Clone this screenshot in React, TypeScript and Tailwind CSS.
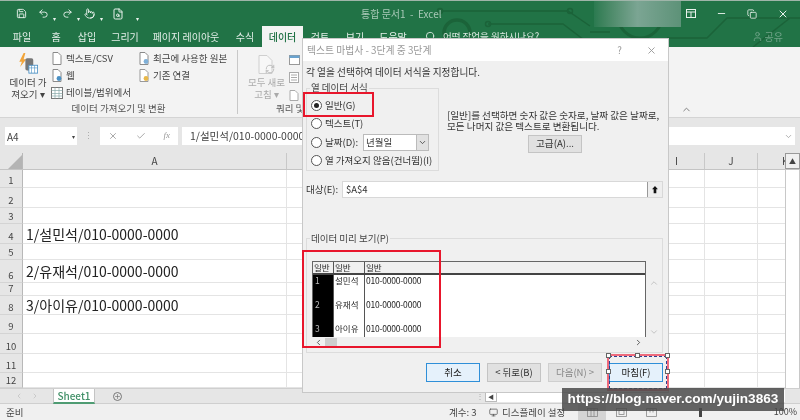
import React from "react";
import { Save, Undo2, Redo2, Pointer, FileSearch, ChevronDown, ChevronUp, ChevronLeft, ChevronRight, X, Check, Search, User, Minus, Copy, Plus, RefreshCw, Monitor } from "lucide-react";

const FONT = "font-['Noto_Sans_CJK_KR','Noto_Sans',sans-serif]";

function Tab({ w, children, active }: { w: number; children: React.ReactNode; active?: boolean }) {
  return (
    <div
      style={{ width: w }}
      className={`h-[21px] flex items-center justify-center text-[10px] whitespace-nowrap ${active ? "bg-[#f3f3f3] text-[#217346] font-medium" : "text-[#e4efe9]"}`}
    >
      {children}
    </div>
  );
}

function DocIcon({ tone = "#8a8a8a", accent }: { tone?: string; accent?: string }) {
  return (
    <svg width="12" height="13" viewBox="0 0 12 13" className="shrink-0">
      <path d="M2 .5h5l3 3v9H2z" fill="#fff" stroke={tone} />
      {accent && <circle cx="8" cy="9.5" r="2.4" fill={accent} />}
    </svg>
  );
}

function GroupIcon({ dot }: { dot?: string }) {
  return (
    <svg width="11" height="11" viewBox="0 0 11 11" className="shrink-0">
      <rect x="3" y="1.500" width="7.500" height="9" fill="#fff" stroke="#999" strokeWidth=".8" />
      <path d="M3 4.500h7.500M3 7.500h7.500M6.500 1.500v9" stroke="#aaa" strokeWidth=".7" />
      {dot && <path d="M0 2.500h3M1.500 1v3" stroke="#3f9a6b" strokeWidth="1" />}
      {dot && <rect x="1" y="5" width="2" height="4" fill={dot} />}
    </svg>
  );
}

function OutlineMark({ sign }: { sign: string }) {
  return (
    <svg width="11" height="10" viewBox="0 0 11 10" className="shrink-0">
      <path d="M5 1h6M5 5h6M5 9h6M10.500 1v8" stroke="#c8c8c8" strokeWidth="1" fill="none" />
      <path d={sign} stroke="#bbb" strokeWidth="1" fill="none" />
    </svg>
  );
}

function RItem({ icon, children, cls = "text-[#444]" }: { icon: React.ReactNode; children: React.ReactNode; cls?: string }) {
  return (
    <div className={`h-[17px] flex items-center gap-[3px] text-[9.500px] whitespace-nowrap ${cls}`}>
      {icon}
      <span>{children}</span>
    </div>
  );
}

function Radio({ on }: { on?: boolean }) {
  return (
    <span className="w-[11px] h-[11px] rounded-full border border-[#555] bg-white flex items-center justify-center shrink-0">
      {on && <span className="w-[5px] h-[5px] rounded-full bg-[#222]" />}
    </span>
  );
}

function DlgBtn({ children, kind }: { children: React.ReactNode; kind: "blue" | "gray" | "off" }) {
  const c =
    kind === "blue"
      ? "border-[#2f8fd8] bg-[#e5f1fb] text-[#222]"
      : kind === "gray"
      ? "border-[#c4c4c4] bg-[#e1e1e1] text-[#333]"
      : "border-[#cfcfcf] bg-[#e1e1e1] text-[#888]";
  return <div className={`w-[54px] h-[19px] border flex items-center justify-center text-[9.500px] whitespace-nowrap ${c}`}>{children}</div>;
}

const ROWS = [18, 20, 16, 20, 16, 23, 13, 19, 19, 20, 19, 15];
const TEXT: Record<number, string> = { 4: "1/설민석/010-0000-0000", 6: "2/유재석/010-0000-0000", 8: "3/아이유/010-0000-0000" };

function Row({ n, h }: { n: number; h: number }) {
  return (
    <div style={{ height: h }} className="flex shrink-0">
      <div className="w-[23px] bg-[#e6e6e6] border-r border-b border-r-[#b8b8b8] border-b-[#d4d4d4] text-[9.500px] text-[#444] flex items-end justify-center pb-[2px] leading-none">{n}</div>
      <div className="w-[264px] border-r border-b border-[#e4e4e4] flex items-center pl-[3px]">
        {TEXT[n] && <span className="text-[14px] leading-none text-[#222] whitespace-nowrap">{TEXT[n]}</span>}
      </div>
      <div className="flex-1 flex border-b border-[#e4e4e4]">
        <div className="w-[418px] border-r border-[#e4e4e4]" />
        <div className="w-[53px] border-r border-[#e4e4e4]" />
        <div className="w-[27px]" />
      </div>
      <div className="w-[15px] bg-white border-x border-[#c8c8c8]" />
    </div>
  );
}

function Handle({ cls }: { cls: string }) {
  return <span className={`absolute w-[5px] h-[5px] bg-white border border-[#666] ${cls}`} />;
}

function Caret() {
  return <span className="text-[6px] text-[#e9f2ec]">▾</span>;
}

export default function App() {
  return (
    <div className={`${FONT} relative w-[800px] h-[420px] overflow-hidden bg-white flex flex-col blur-[0.35px]`}>
      {/* Title + tabs */}
      <div className="relative h-[47px] bg-[#217346] border-t border-[#9fb5a9] shrink-0">
        <svg className="absolute inset-0" width="800" height="46" viewBox="0 1 800 46" fill="none" stroke="#1b6339" strokeWidth="1.500">
          <path d="M440 11H568L590 26M488 24H563L592 46M590 32H610M667 38H707L727 18H800M753 47L790 18" />
          <circle cx="440" cy="11" r="2.500" />
          <circle cx="570" cy="11" r="2.500" />
          <circle cx="488" cy="24" r="2.500" />
          <circle cx="457" cy="33" r="13" strokeWidth="3.500" />
          <circle cx="640" cy="16" r="22" strokeWidth="3" />
        </svg>
        <div className="absolute left-[594px] top-0 w-[87px] h-[26px] bg-gradient-to-r from-[#2b7a50] via-[#7ba593] to-[#5d9278]" />
        <div className="relative h-[25px] flex items-center">
          <div className="flex items-center w-[150px] pl-[16px] text-[#e9f2ec]">
            <Save size={11} />
            <Undo2 size={11} className="ml-[11px]" />
            <span className="ml-[4px]"><Caret /></span>
            <Redo2 size={11} className="ml-[6px]" />
            <span className="ml-[4px]"><Caret /></span>
            <Pointer size={11} className="ml-[4px]" />
            <span className="ml-[5px]"><Caret /></span>
            <FileSearch size={12} className="ml-[9px]" />
            <span className="ml-[12px]"><Caret /></span>
          </div>
          <div className="pl-[211px] w-[386px] text-[10px] text-[#a9c9b8] whitespace-nowrap">통합 문서1 &nbsp;-&nbsp; Excel</div>
          <div className="flex items-center text-[#e9f2ec] pl-[150px] gap-[20px]">
            <svg width="10" height="9" viewBox="0 0 10 9" fill="none" stroke="currentColor"><rect x=".5" y=".5" width="9" height="8" /><path d="M.5 3h9M5 3v5.500" /></svg>
            <Minus size={11} />
            <Copy size={10} />
            <X size={12} />
          </div>
        </div>
        <div className="relative h-[21px] flex items-center">
          <Tab w={44}>파일</Tab>
          <Tab w={24}>홈</Tab>
          <Tab w={38}>삽입</Tab>
          <Tab w={38}>그리기</Tab>
          <Tab w={84}>페이지 레이아웃</Tab>
          <Tab w={34}>수식</Tab>
          <Tab w={41} active>데이터</Tab>
          <Tab w={34}>검토</Tab>
          <Tab w={36}>보기</Tab>
          <Tab w={40}>도움말</Tab>
          <Search size={11} className="ml-[12px] text-[#dbe9e1]" />
          <span className="text-[9.500px] text-[#dbe9e1] ml-[7px] whitespace-nowrap">어떤 작업을 원하시나요?</span>
          <span className="ml-auto mr-[17px] flex items-center gap-[2px] text-[10px] text-[#6fa388]">
            <User size={11} />
            공유
          </span>
        </div>
      </div>

      {/* Ribbon */}
      <div className="h-[71px] bg-[#f3f3f3] border-b border-[#d4d4d4] flex shrink-0">
        <div className="w-[238px] border-r border-[#c8c8c8] my-[3px] flex flex-col">
          <div className="flex-1 flex">
            <div className="w-[56px] flex flex-col items-center pt-[3px]">
              <svg width="20" height="21" viewBox="0 0 22 24">
                <path d="M6 0L1 10h3l-2 6 7-9H6l2-7z" fill="#f2a53a" />
                <rect x="8" y="6" width="9" height="14" rx="2" fill="#777" />
                <rect x="12" y="14" width="10" height="9" fill="#fff" stroke="#4a90c4" />
                <path d="M12 17h10M15 14v9M18.500 14v9" stroke="#4a90c4" strokeWidth=".7" />
              </svg>
              <div className="text-[9.500px] leading-[12px] text-[#444] text-center whitespace-nowrap mt-[2px]">데이터 가<br />져오기 ▾</div>
            </div>
            <div className="w-[82px] flex flex-col -ml-[5px] mr-[5px]">
              <RItem icon={<DocIcon />}>텍스트/CSV</RItem>
              <RItem icon={<DocIcon accent="#4a90c4" />}>웹</RItem>
              <RItem icon={<svg width="12" height="12" viewBox="0 0 12 12"><rect x=".5" y=".5" width="11" height="11" fill="#fff" stroke="#777" /><path d="M.5 3.500h11M.5 6.500h11M.5 9h11M4 .5v11M8 .5v11" stroke="#8aa" strokeWidth=".7" /></svg>}>테이블/범위에서</RItem>
            </div>
            <div className="flex flex-col">
              <RItem icon={<DocIcon accent="#7fb0d8" />}>최근에 사용한 원본</RItem>
              <RItem icon={<DocIcon tone="#999" accent="#e8b84a" />}>기존 연결</RItem>
            </div>
          </div>
          <div className="h-[14px] text-[9.500px] leading-[14px] text-[#555] text-center whitespace-nowrap">데이터 가져오기 및 변환</div>
        </div>
        <div className="flex-1 flex flex-col my-[3px] pl-[7px]">
          <div className="flex-1 flex text-[#aaa]">
            <div className="w-[43px] flex flex-col items-center pt-[5px]">
              <div className="relative w-[17px] h-[20px]">
                <svg width="15" height="19" viewBox="0 0 15 19" className="shrink-0"><path d="M1 .5h8l5 5v13H1z" fill="#f7f7f7" stroke="#cfcfcf" /></svg>
                <RefreshCw size={10} className="absolute right-0 bottom-[1px] text-[#b4b4b4]" />
              </div>
              <div className="text-[9.500px] leading-[12px] text-center whitespace-nowrap mt-[1px]">모두 새로<br />고침 ▾</div>
            </div>
            <div className="flex flex-col gap-[7px] pt-[5px] ml-[1px]">
              <svg width="11" height="10" viewBox="0 0 11 10" className="shrink-0"><rect x=".5" y=".5" width="10" height="9" fill="#fff" stroke="#999" /><rect x=".5" y=".5" width="10" height="2.500" fill="#6aa3cf" /></svg>
              <svg width="10" height="11" viewBox="0 0 10 11" className="shrink-0"><rect x=".5" y=".5" width="9" height="10" fill="#fff" stroke="#aaa" /><path d="M2 3h6M2 5.500h6M2 8h6" stroke="#aaa" /></svg>
              <svg width="10" height="11" viewBox="0 0 10 11" className="shrink-0"><path d="M1 .5h5l3 3v7H1z" fill="#fff" stroke="#aaa" /></svg>
            </div>
          </div>
          <div className="h-[14px] text-[9.500px] leading-[14px] text-[#555] pl-[31px] whitespace-nowrap">쿼리 및 연결</div>
        </div>
        <div className="w-[99px] flex flex-col my-[3px] border-l-2 border-r border-[#d0d0d0] pl-[8px] relative">
          <div className="flex-1 flex flex-col">
            <div className="flex items-center">
              <RItem icon={<GroupIcon dot="#3f9a6b" />}>그룹</RItem>
              <span className="text-[7px] text-[#555] ml-[6px]">▾</span>
              <span className="ml-auto mr-[7px]"><OutlineMark sign="M0 3h4M2 1v4" /></span>
            </div>
            <div className="flex items-center">
              <RItem icon={<GroupIcon dot="#d9534f" />}>그룹 해제</RItem>
              <span className="text-[7px] text-[#555] ml-[8px]">▾</span>
              <span className="ml-auto mr-[7px]"><OutlineMark sign="M0 3h4" /></span>
            </div>
            <RItem icon={<GroupIcon />}>부분합</RItem>
          </div>
          <div className="h-[14px] flex items-center text-[9.500px] text-[#555] pl-[25px]">
            개요
            <svg width="7" height="7" viewBox="0 0 7 7" fill="none" stroke="#888" strokeWidth=".8" className="ml-auto mr-[3px]"><path d="M.5 3V.5H6.500V6.500H3M2 2l3 3M3 5h2V3" /></svg>
          </div>
        </div>
        <div className="flex-1 flex items-end justify-center pb-[2px] text-[#777]">
          <ChevronUp size={11} />
        </div>
      </div>

      {/* Formula bar */}
      <div className="h-[35px] bg-[#e6e6e6] flex items-center pl-[5px] pr-[5px] pt-[1px] shrink-0">
        <div className="w-[72px] h-[18px] bg-white flex items-center justify-between px-[2px] text-[10px] text-[#444]">
          A4 <span className="text-[6px]">▾</span>
        </div>
        <div className="w-[23px] text-center text-[9px] text-[#aaa]">⋮</div>
        <div className="w-[78px] h-[18px] bg-white flex items-center justify-between px-[8px] text-[#999]">
          <X size={10} />
          <Check size={10} />
          <span className="italic text-[9px] font-['Liberation_Serif',serif]">fx</span>
        </div>
        <div className="flex-1 h-[18px] bg-white ml-[4px] flex items-center pl-[8px] text-[10.500px] text-[#444]">1/설민석/010-0000-0000
          <ChevronDown size={9} className="ml-auto mr-[2px] text-[#999]" />
        </div>
      </div>

      {/* Column header */}
      <div className="h-[17px] flex bg-[#e6e6e6] border-b border-[#c4c4c4] shrink-0">
        <div className="w-[23px] border-r border-[#b8b8b8] flex items-end justify-end">
          <svg width="14" height="14" viewBox="0 0 14 14"><path d="M14 0V14H0z" fill="#b4b4b4" /></svg>
        </div>
        <div className="w-[264px] border-r border-[#c8c8c8] text-center text-[10px] text-[#444] leading-[16px]">A</div>
        <div className="flex-1 flex text-[10px] text-[#444] leading-[16px]">
          <div className="w-[418px] border-r border-[#c8c8c8] text-right pr-[26px]">I</div>
          <div className="w-[53px] border-r border-[#c8c8c8] text-center">J</div>
          <div className="w-[27px] pl-[24px]">K</div>
        </div>
        <div className="w-[15px] bg-[#f0f0f0] border border-[#999] flex items-center justify-center text-[7px] text-[#444]">▲</div>
      </div>

      {/* Grid */}
      <div className="h-[218px] overflow-hidden flex flex-col shrink-0">
        {ROWS.map((h, i) => (
          <Row key={i} n={i + 1} h={h} />
        ))}
      </div>

      {/* Sheet tabs */}
      <div className="h-[16px] bg-[#e6e6e6] border-y border-[#cfcfcf] flex items-center shrink-0">
        <div className="w-[53px] flex justify-center gap-[8px] text-[#bbb]">
          <ChevronLeft size={8} />
          <ChevronRight size={8} />
        </div>
        <div className="w-[42px] h-[15px] bg-white border-x border-b-2 border-x-[#c4c4c4] border-b-[#4f9c73] text-[10px] leading-[14px] text-[#3f8f66] font-medium text-center">Sheet1</div>
        <div className="ml-[18px] w-[9px] h-[9px] rounded-full border border-[#777] flex items-center justify-center text-[#666]">
          <Plus size={7} />
        </div>
        <div className="ml-[354px] text-[8px] text-[#aaa] w-[9px]">⋮</div>
        <div className="w-[12px] h-[12px] bg-white border border-[#bbb] flex items-center justify-center text-[6px] text-[#444]">◀</div>
        <div className="flex-1 h-[12px] bg-white mr-[15px]" />
      </div>

      {/* Status bar */}
      <div className="flex-1 bg-[#f0f0f0] flex items-center text-[9.500px] text-[#444] pl-[6px]">
        <span className="w-[443px]">준비</span>
        <span className="w-[40px] whitespace-nowrap">계수: 3</span>
        <Monitor size={9} className="text-[#555]" />
        <span className="ml-[4px] w-[76px] whitespace-nowrap">디스플레이 설정</span>
        <div className="w-[28px] h-full bg-[#d4d4d4] flex items-center justify-center text-[#888]">
          <svg width="11" height="9" viewBox="0 0 11 9" fill="none" stroke="currentColor" strokeWidth=".8"><rect x=".5" y=".5" width="10" height="8" /><path d="M4 .5v8M7 .5v8" /></svg>
        </div>
        <div className="w-[30px] flex justify-center text-[#888]">
          <svg width="11" height="9" viewBox="0 0 11 9" fill="none" stroke="currentColor" strokeWidth=".8"><rect x=".5" y=".5" width="10" height="8" /><rect x="3" y="2.500" width="5" height="4" /></svg>
        </div>
        <div className="w-[30px] flex justify-center text-[#888]">
          <svg width="11" height="9" viewBox="0 0 11 9" fill="none" stroke="currentColor" strokeWidth=".8"><path d="M.5 .5h10v8H.5zM4 .5v4M7 .5v4" /></svg>
        </div>
        <span className="ml-[33px] w-[3px] h-[9px] bg-[#444]" />
        <span className="ml-auto mr-[3px] text-[9px]">100%</span>
      </div>

      {/* Dialog */}
      <div className="absolute left-[302px] top-[38px] w-[367px] h-[355px] bg-[#f0f0f0] border border-[#c8c8c8] z-20 flex flex-col px-[3px]">
        <div className="-mx-[3px] h-[22px] bg-white flex items-center pl-[4px] pr-[11px] text-[9.800px] text-[#999] shrink-0">
          <span>텍스트 마법사 - 3단계 중 3단계</span>
          <span className="ml-auto mr-[24px]">?</span>
          <X size={11} />
        </div>
        <div className="h-[21px] flex items-center text-[9.700px] text-[#333] whitespace-nowrap mt-[1px] shrink-0">각 열을 선택하여 데이터 서식을 지정합니다.</div>
        <div className="flex shrink-0">
          <div className="relative w-[133px] h-[83px] border border-[#dcdcdc] mt-[5px] flex flex-col pl-[4px] pt-[7px] text-[9.500px] text-[#333] shrink-0">
            <span className="absolute -top-[8px] left-[3px] bg-[#f0f0f0] px-[1px] leading-[12px] text-[#444]">열 데이터 서식</span>
            <div className="h-[18px] flex items-center gap-[3px]"><Radio on />일반(G)</div>
            <div className="h-[19px] flex items-center gap-[3px]"><Radio />텍스트(T)</div>
            <div className="h-[18px] flex items-center gap-[3px]">
              <Radio />날짜(D):
              <div className="ml-[2px] w-[66px] h-[17px] bg-white border border-[#bbb] flex items-center pl-[2px] justify-between">
                년월일
                <span className="w-[12px] h-full bg-[#e1e1e1] border-l border-[#bbb] flex items-center justify-center"><ChevronDown size={9} /></span>
              </div>
            </div>
            <div className="h-[18px] flex items-center gap-[3px] whitespace-nowrap"><Radio />열 가져오지 않음(건너뜀)(I)</div>
          </div>
          <div className="flex-1 pl-[8px] pt-[27px] flex flex-col text-[9.600px] leading-[11px] text-[#333] whitespace-nowrap">
            <div>[일반]를 선택하면 숫자 값은 숫자로, 날짜 값은 날짜로,</div>
            <div>모든 나머지 값은 텍스트로 변환됩니다.</div>
            <div className="ml-[81px] mt-[3px] w-[54px] h-[18px] bg-[#e1e1e1] border border-[#c4c4c4] flex items-center justify-center leading-none">고급(A)...</div>
          </div>
        </div>
        <div className="mt-[10px] flex items-center h-[17px] text-[9.500px] text-[#333] shrink-0">
          <span className="w-[36px]">대상(E):</span>
          <div className="flex-1 h-full mr-[2px] bg-white border border-[#d8d8d8] flex items-center justify-between pl-[3px]">
            $A$4
            <span className="w-[15px] h-full bg-[#eee] border-l border-[#999] flex items-center justify-center text-[8px] text-[#111]">⬆</span>
          </div>
        </div>
        <div className="relative mt-[40px] w-[357px] h-[115px] border border-[#dcdcdc] shrink-0 pl-[5px] pt-[22px]">
          <span className="absolute -top-[7px] left-[3px] bg-[#f0f0f0] px-[1px] text-[9.500px] leading-[12px] text-[#444]">데이터 미리 보기(P)</span>
          <div className="flex">
            <div className="w-[334px] border-x border-t border-[#666] flex flex-col text-[8.500px] text-[#222] shrink-0">
              <div className="flex h-[13px] bg-[#f0f0f0] border-b-2 border-[#444] leading-[11px]">
                <div className="w-[21px] border-r border-[#555] pl-[1px]">일반</div>
                <div className="w-[31px] border-r border-[#555] pl-[1px]">일반</div>
                <div className="pl-[1px]">일반</div>
              </div>
              <div className="flex h-[62px] bg-white leading-[10px]">
                <div className="w-[20px] bg-black text-[#bbb] pl-[2px] flex flex-col gap-[14px]"><span>1</span><span>2</span><span>3</span></div>
                <div className="w-[32px] border-x border-[#555] pl-[1px] flex flex-col gap-[14px]"><span>설민석</span><span>유재석</span><span>아이유</span></div>
                <div className="flex-1 pl-[1px] flex flex-col gap-[14px] tracking-[-0.2px]"><span>010-0000-0000</span><span>010-0000-0000</span><span>010-0000-0000</span></div>
              </div>
            </div>
            <div className="w-[15px] flex flex-col justify-between items-center text-[#bbb] pt-[17px]">
              <ChevronUp size={10} />
              <ChevronDown size={10} />
            </div>
          </div>
          <div className="w-[334px] h-[11px] flex items-center justify-between text-[#333] pr-[3px]">
            <span className="flex items-center"><ChevronLeft size={9} className="ml-[2px]" /><span className="ml-[2px] w-[12px] h-[10px] bg-[#cdcdcd]" /></span>
            <ChevronRight size={9} />
          </div>
        </div>
        <div className="mt-auto mb-[10px] flex justify-end gap-[7px] pr-[2px]">
          <DlgBtn kind="blue">취소</DlgBtn>
          <DlgBtn kind="gray">&lt; 뒤로(B)</DlgBtn>
          <DlgBtn kind="off">다음(N) &gt;</DlgBtn>
          <DlgBtn kind="blue">마침(F)</DlgBtn>
        </div>
      </div>

      {/* Annotations */}
      <div className="absolute left-[303px] top-[92px] w-[71px] h-[25px] border-2 border-[#e8162c] z-30" />
      <div className="absolute left-[302px] top-[250px] w-[139px] h-[98px] border-2 border-[#e8162c] z-30" />
      <div className="absolute left-[607px] top-[354px] w-[62px] h-[37px] border-2 border-[#ef6b7c] z-30">
        <span className="absolute inset-0 border border-dashed border-[#2f3f8f]" />
        <Handle cls="-left-[3px] -top-[3px]" />
        <Handle cls="left-[26px] -top-[3px]" />
        <Handle cls="-right-[3px] -top-[3px]" />
        <Handle cls="-left-[3px] top-[13px]" />
        <Handle cls="-right-[3px] top-[13px]" />
      </div>

      {/* Watermark */}
      <div className="absolute left-[562px] top-[388px] w-[222px] h-[23px] bg-[#4a4a4a]/85 z-40 flex items-center justify-center text-white font-bold text-[13.600px] font-['Liberation_Sans',sans-serif] whitespace-nowrap">
        https://blog.naver.com/yujin3863
      </div>
    </div>
  );
}
